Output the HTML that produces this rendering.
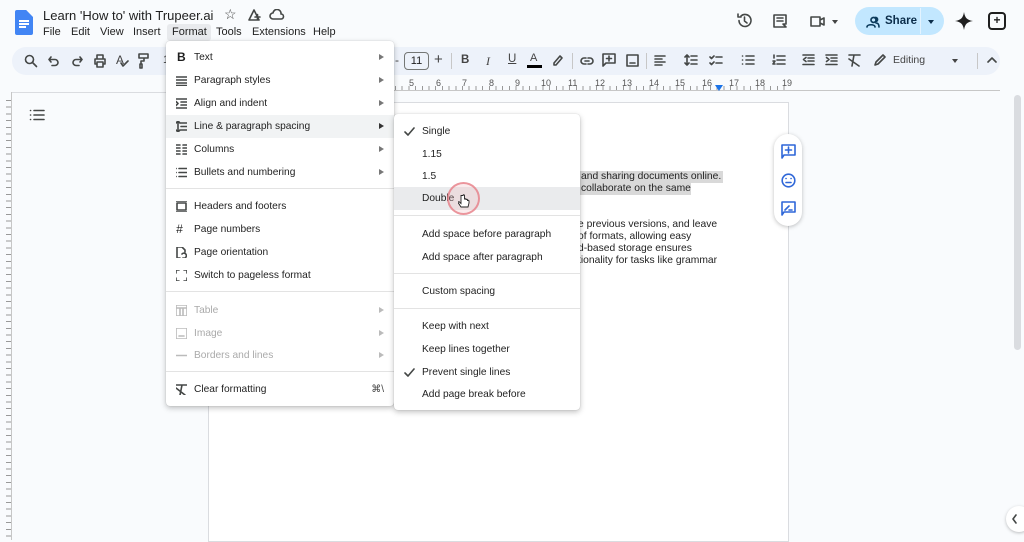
<!DOCTYPE html>
<html><head><meta charset="utf-8">
<style>
*{box-sizing:border-box;margin:0;padding:0}
body{width:1024px;height:540px;overflow:hidden;background:#f9fbfd;font-family:"Liberation Sans",Arial,sans-serif;color:#1f1f1f;position:relative}
.a{position:absolute}
.ic{position:absolute;fill:none;stroke:#444746;stroke-width:1.6;stroke-linecap:round;stroke-linejoin:round}
.menu{position:absolute;background:#fff;border-radius:4px;box-shadow:0 2px 6px rgba(0,0,0,.25),0 0 1px rgba(0,0,0,.2)}
.it{position:absolute;left:0;right:0;height:23px;font-size:10.2px;line-height:24px;color:#1f1f1f}
.it .t{position:absolute;left:28px}
.it .ar{position:absolute;right:10px;top:8px;width:0;height:0;border-left:5px solid #777;border-top:3px solid transparent;border-bottom:3px solid transparent}
.it.dis{color:#aaa}
.it.dis .ar{border-left-color:#bbb}
.sep{position:absolute;left:0;right:0;height:1px;background:#e3e3e3}
.mi{position:absolute;left:10px;top:6px;width:11px;height:11px}
.sub .t{left:28px}
.doc{position:absolute;font-size:10.3px;line-height:12px;color:#222;white-space:nowrap}
.rn{position:absolute;top:78px;font-size:9px;color:#555}
</style></head><body>
<div class="a" style="left:15px;top:10px;width:18px;height:25px;background:#4285f4;border-radius:2px;clip-path:polygon(0 0,62% 0,100% 28%,100% 100%,0 100%)"></div>
<div class="a" style="left:19px;top:20px;width:10px;height:1.5px;background:#fff"></div>
<div class="a" style="left:19px;top:23px;width:10px;height:1.5px;background:#fff"></div>
<div class="a" style="left:19px;top:26px;width:7px;height:1.5px;background:#fff"></div>
<div class="a" style="left:43px;top:8px;font-size:13px;color:#1f1f1f">Learn 'How to' with Trupeer.ai</div>
<div class="a" style="left:224px;top:6px;font-size:14px;color:#444">☆</div>
<svg class="ic" style="left:246px;top:8px" width="16" height="14"><path d="M3 12 L8 2 L13 12 Z M9 9h5 M11.5 6.5v5"/></svg>
<svg class="ic" style="left:269px;top:9px" width="16" height="12"><path d="M4 10 a3 3 0 0 1 0-6 a4 4 0 0 1 8 1 a2.5 2.5 0 0 1 0 5 Z"/></svg>
<div class="a" style="left:167px;top:24px;width:44px;height:17px;background:#e8eaed;border-radius:3px"></div>
<div class="a" style="top:26px;font-size:11px;left:43px">File</div>
<div class="a" style="top:26px;font-size:11px;left:71px">Edit</div>
<div class="a" style="top:26px;font-size:11px;left:100px">View</div>
<div class="a" style="top:26px;font-size:11px;left:133px">Insert</div>
<div class="a" style="top:26px;font-size:11px;left:172px">Format</div>
<div class="a" style="top:26px;font-size:11px;left:216px">Tools</div>
<div class="a" style="top:26px;font-size:11px;left:252px">Extensions</div>
<div class="a" style="top:26px;font-size:11px;left:313px">Help</div>
<svg class="ic" style="left:736px;top:12px" width="17" height="17"><path d="M3 8.5 a6 6 0 1 0 2-4.5 M2 2v3h3 M8.5 5v4l2.5 2"/></svg>
<svg class="ic" style="left:772px;top:13px" width="16" height="16"><path d="M2 2h12v9H11l3 3H2z M5 5h6 M5 8h6"/></svg>
<svg class="ic" style="left:809px;top:14px" width="18" height="14"><path d="M2 3h9v9H2z M11 6l4-2v7l-4-2"/></svg>
<div class="a" style="left:832px;top:20px;border-top:4px solid #444;border-left:3px solid transparent;border-right:3px solid transparent"></div>
<div class="a" style="left:855px;top:7px;width:89px;height:28px;background:#c2e7ff;border-radius:14px"></div>
<div class="a" style="left:920px;top:8px;width:1px;height:26px;background:#e3f3ff"></div>
<svg class="ic" style="left:866px;top:14px;stroke:#0b3a5c" width="14" height="14"><path d="M5 6 a2.5 2.5 0 1 0 0-.1 M1 13c0-3 8-3 8 0 M9 3.5a2 2 0 1 1 1 4 M10 9c2 0 3 1.5 3 4"/></svg>
<div class="a" style="left:885px;top:15px;font-size:11.5px;font-weight:bold;color:#0b2d4a">Share</div>
<div class="a" style="left:928px;top:20px;border-top:4px solid #0b2d4a;border-left:3px solid transparent;border-right:3px solid transparent"></div>
<svg class="a" style="left:955px;top:12px" width="18" height="18"><path d="M9 0 C10 6 12 8 18 9 C12 10 10 12 9 18 C8 12 6 10 0 9 C6 8 8 6 9 0Z" fill="#1f1f1f"/></svg>
<div class="a" style="left:988px;top:12px;width:18px;height:18px;border:2px solid #1f1f1f;border-radius:4px;font-size:12px;line-height:13px;text-align:center;font-weight:bold">+</div>
<div class="a" style="left:12px;top:47px;width:988px;height:28px;background:#edf2fa;border-radius:14px"></div>
<svg class="ic" style="left:24px;top:54px" width="14" height="14"><circle cx="5.5" cy="5.5" r="4"/><path d="M8.5 8.5l4 4"/></svg>
<svg class="ic" style="left:48px;top:55px" width="12" height="12"><path d="M3 2L1 4.5 3 7 M1 4.5h6a3 3 0 0 1 0 6H4"/></svg>
<svg class="ic" style="left:71px;top:55px" width="12" height="12"><path d="M9 2l2 2.5L9 7 M11 4.5H5a3 3 0 0 0 0 6h3"/></svg>
<svg class="ic" style="left:93px;top:54px" width="14" height="14"><path d="M4 5V1h6v4 M2 5h10v5h-2 M4 10H2V5 M4 8h6v5H4z"/></svg>
<div class="a" style="left:116px;top:53px;font-size:12px;color:#444">A</div><svg class="ic" style="left:120px;top:60px" width="10" height="8"><path d="M1 3l2 3 5-5"/></svg>
<svg class="ic" style="left:138px;top:53px" width="12" height="16"><path d="M1 1h9v4H1z M6 5v3H3v3 M2 11h2v4H2z"/></svg>
<div class="a" style="left:163px;top:54px;font-size:11px;color:#444">1</div>
<div class="a" style="left:395px;top:53px;font-size:12px;color:#444">-</div>
<div class="a" style="left:404px;top:52px;width:25px;height:18px;border:1px solid #747775;border-radius:4px;font-size:11px;line-height:16px;text-align:center">11</div>
<div class="a" style="left:434px;top:51px;font-size:15px;color:#444">+</div>
<div class="a" style="left:451px;top:53px;width:1px;height:16px;background:#c7c7c7"></div>
<div class="a" style="left:461px;top:54px;font-size:11.5px;font-weight:bold;color:#444">B</div>
<div class="a" style="left:486px;top:54px;font-size:12px;font-style:italic;font-family:'Liberation Serif',serif;color:#444">I</div>
<div class="a" style="left:508px;top:53px;font-size:11.5px;color:#444;text-decoration:underline">U</div>
<div class="a" style="left:530px;top:52px;font-size:11px;color:#444">A</div>
<div class="a" style="left:527px;top:65px;width:15px;height:3px;background:#000"></div>
<svg class="ic" style="left:552px;top:53px" width="12" height="13"><path d="M2 10l6-7 2 2-6 7H2z"/></svg>
<div class="a" style="left:572px;top:53px;width:1px;height:16px;background:#c7c7c7"></div>
<svg class="ic" style="left:580px;top:56px" width="14" height="10"><path d="M6 2H4a3 3 0 0 0 0 6h2 M8 2h2a3 3 0 0 1 0 6H8 M5 5h4"/></svg>
<svg class="ic" style="left:602px;top:53px" width="14" height="14"><path d="M1 1h12v9H4l-3 3z M7 3v5 M4.5 5.5h5"/></svg>
<svg class="ic" style="left:626px;top:54px" width="13" height="13"><path d="M1 1h11v11H1z M4 9h5"/></svg>
<div class="a" style="left:646px;top:53px;width:1px;height:16px;background:#c7c7c7"></div>
<svg class="ic" style="left:654px;top:54px" width="12" height="12"><path d="M1 2h10 M1 5h7 M1 8h10 M1 11h7"/></svg>
<svg class="ic" style="left:684px;top:54px" width="14" height="12"><path d="M3 1v10 M1 3l2-2 2 2 M1 9l2 2 2-2 M7 2h6 M7 6h6 M7 10h6"/></svg>
<svg class="ic" style="left:709px;top:54px" width="14" height="12"><path d="M1 3l1.5 1.5L5 2 M1 9l1.5 1.5L5 8 M7 3h6 M7 9h6"/></svg>
<svg class="ic" style="left:741px;top:54px" width="14" height="12"><path d="M1.5 2h.1 M1.5 6h.1 M1.5 10h.1 M5 2h8 M5 6h8 M5 10h8"/></svg>
<svg class="ic" style="left:772px;top:54px" width="14" height="12"><path d="M2 1v3 M1 7h2l-2 3h2 M5 2h8 M5 6h8 M5 10h8"/></svg>
<svg class="ic" style="left:802px;top:54px" width="13" height="12"><path d="M1 1h11 M6 4h6 M6 7h6 M1 10.5h11 M4 3.5L1.5 5.5 4 7.5"/></svg>
<svg class="ic" style="left:825px;top:54px" width="13" height="12"><path d="M1 1h11 M6 4h6 M6 7h6 M1 10.5h11 M1.5 3.5L4 5.5 1.5 7.5"/></svg>
<svg class="ic" style="left:848px;top:54px" width="13" height="13"><path d="M1 1h11 M6 1L4 12 M1 5l10 7"/></svg>
<svg class="ic" style="left:874px;top:54px" width="12" height="12"><path d="M1 11l1-3 7-7 2 2-7 7z"/></svg>
<div class="a" style="left:893px;top:54px;font-size:10.5px;color:#444">Editing</div>
<div class="a" style="left:952px;top:59px;border-top:4px solid #444;border-left:3px solid transparent;border-right:3px solid transparent"></div>
<div class="a" style="left:977px;top:53px;width:1px;height:16px;background:#c7c7c7"></div>
<svg class="ic" style="left:987px;top:57px" width="10" height="7"><path d="M1 5l4-4 4 4"/></svg>
<div class="a" style="left:208px;top:90px;width:792px;height:1px;background:#c7c7c7"></div>
<div class="a" style="left:395px;top:86px;width:392px;height:4px;background:repeating-linear-gradient(90deg,#999 0 1px,transparent 1px 6.7px)"></div>
<div class="rn" style="left:409px">5</div><div class="rn" style="left:436px">6</div><div class="rn" style="left:462px">7</div><div class="rn" style="left:489px">8</div><div class="rn" style="left:515px">9</div><div class="rn" style="left:541px">10</div><div class="rn" style="left:568px">11</div><div class="rn" style="left:595px">12</div><div class="rn" style="left:622px">13</div><div class="rn" style="left:649px">14</div><div class="rn" style="left:675px">15</div><div class="rn" style="left:702px">16</div><div class="rn" style="left:729px">17</div><div class="rn" style="left:755px">18</div><div class="rn" style="left:782px">19</div>
<div class="a" style="left:715px;top:85px;border-top:6px solid #1a73e8;border-left:4px solid transparent;border-right:4px solid transparent"></div>
<div class="a" style="left:11px;top:92px;width:1px;height:448px;background:#c7c7c7"></div>
<div class="a" style="left:6px;top:100px;width:5px;height:440px;background:repeating-linear-gradient(180deg,#999 0 1px,transparent 1px 6.7px)"></div>
<div class="a" style="left:12px;top:92px;width:196px;height:1px;background:#dadce0"></div>
<svg class="ic" style="left:29px;top:109px" width="16" height="12"><path d="M1.5 1.5h.1 M1.5 6h.1 M1.5 10.5h.1 M5 1.5h10 M5 6h10 M5 10.5h10"/></svg>
<div class="a" style="left:208px;top:102px;width:581px;height:440px;background:#fff;border:1px solid #dadce0"></div>
<div class="a" style="left:578px;top:171px;width:145px;height:12px;background:#d9d9d9"></div>
<div class="a" style="left:578px;top:183px;width:113px;height:12px;background:#d9d9d9"></div>
<div class="doc" style="left:581px;top:171px">and sharing documents online.</div>
<div class="doc" style="left:581px;top:183px">collaborate on the same</div>
<div class="doc" style="left:578px;top:219px">e previous versions, and leave</div>
<div class="doc" style="left:578px;top:231px">of formats, allowing easy</div>
<div class="doc" style="left:578px;top:243px">d-based storage ensures</div>
<div class="doc" style="left:578px;top:255px">tionality for tasks like grammar</div>
<div class="a" style="left:774px;top:134px;width:28px;height:92px;background:#fff;border-radius:14px;box-shadow:0 1px 4px rgba(0,0,0,.25)"></div>
<svg class="ic" style="left:781px;top:144px;stroke:#2f67d8" width="15" height="15"><path d="M1 1h13v10H3l-2 3z M7.5 3v6 M4.5 6h6"/></svg>
<svg class="ic" style="left:781px;top:173px;stroke:#2f67d8" width="15" height="15"><circle cx="7.5" cy="7.5" r="6.3"/><path d="M5 5.5h.1 M10 5.5h.1 M5 9.5h5"/></svg>
<svg class="ic" style="left:781px;top:201px;stroke:#2f67d8" width="15" height="15"><path d="M1 1h13v10H3l-2 3z M4 9l4-4 M8 9h3"/></svg>
<div class="a" style="left:1014px;top:95px;width:7px;height:255px;background:#dadce0;border-radius:4px"></div>
<div class="a" style="left:1006px;top:506px;width:26px;height:26px;background:#fff;border-radius:13px;box-shadow:0 1px 3px rgba(0,0,0,.25)"></div>
<svg class="ic" style="left:1011px;top:514px" width="8" height="10"><path d="M5 1L2 5l3 4"/></svg>

<div class="menu" style="left:166px;top:41px;width:228px;height:365px">
 <div class="it" style="top:5px"><span class="mi" style="font-weight:bold;font-size:12px;line-height:11px;left:11px">B</span><span class="t">Text</span><span class="ar"></span></div>
 <div class="it" style="top:28px"><svg class="ic mi" width="11" height="11"><path d="M0 2h11 M0 5h11 M0 8h11 M0 10.5h11"/></svg><span class="t">Paragraph styles</span><span class="ar"></span></div>
 <div class="it" style="top:51px"><svg class="ic mi" width="11" height="11"><path d="M0 1h11 M5 4h6 M5 7h6 M0 10h11 M0 3.5l2 2-2 2"/></svg><span class="t">Align and indent</span><span class="ar"></span></div>
 <div class="it" style="top:74px;background:#f1f3f4"><svg class="ic mi" width="11" height="11"><path d="M2 0v11 M0 2l2-2 2 2 M0 9l2 2 2-2 M5 2h6 M5 5.5h6 M5 9h6"/></svg><span class="t">Line &amp; paragraph spacing</span><span class="ar" style="border-left-color:#333"></span></div>
 <div class="it" style="top:97px"><svg class="ic mi" width="11" height="11"><path d="M0 1h4 M0 4h4 M0 7h4 M0 10h4 M7 1h4 M7 4h4 M7 7h4 M7 10h4"/></svg><span class="t">Columns</span><span class="ar"></span></div>
 <div class="it" style="top:120px"><svg class="ic mi" width="11" height="11"><path d="M0 1.5h.1 M0 5.5h.1 M0 9.5h.1 M3 1.5h8 M3 5.5h8 M3 9.5h8"/></svg><span class="t">Bullets and numbering</span><span class="ar"></span></div>
 <div class="sep" style="top:147px"></div>
 <div class="it" style="top:154px"><svg class="ic mi" width="11" height="11"><path d="M0 0h11 M1 2h9v7H1z M0 11h11"/></svg><span class="t">Headers and footers</span></div>
 <div class="it" style="top:177px"><span class="mi" style="font-size:12px;line-height:11px;font-style:italic">#</span><span class="t">Page numbers</span></div>
 <div class="it" style="top:200px"><svg class="ic mi" width="11" height="11"><path d="M6 0H1v11h3 M6 0l3 3v2 M7 11a2.5 2.5 0 1 0-1-4"/></svg><span class="t">Page orientation</span></div>
 <div class="it" style="top:223px"><svg class="ic mi" width="11" height="11"><path d="M0 3V0h3 M8 0h3v3 M11 8v3H8 M3 11H0V8"/></svg><span class="t">Switch to pageless format</span></div>
 <div class="sep" style="top:250px"></div>
 <div class="it dis" style="top:258px"><svg class="ic mi" style="stroke:#bbb" width="11" height="11"><path d="M0 0h11v11H0z M0 3h11 M4 3v8 M7 3v8"/></svg><span class="t">Table</span><span class="ar"></span></div>
 <div class="it dis" style="top:281px"><svg class="ic mi" style="stroke:#bbb" width="11" height="11"><path d="M0 0h11v11H0z M3 8h5"/></svg><span class="t">Image</span><span class="ar"></span></div>
 <div class="it dis" style="top:303px"><svg class="ic mi" style="stroke:#bbb" width="11" height="11"><path d="M0 5.5h11"/></svg><span class="t">Borders and lines</span><span class="ar"></span></div>
 <div class="sep" style="top:330px"></div>
 <div class="it" style="top:337px"><svg class="ic mi" width="11" height="11"><path d="M0 1h11 M6 1L4 11 M0 4l9 7"/></svg><span class="t">Clear formatting</span><span class="a" style="right:10px;font-size:10px;color:#444">⌘\</span></div>
</div>
<div class="menu sub" style="left:394px;top:114px;width:186px;height:296px">
 <div class="it" style="top:6px"><svg class="ic mi" width="11" height="11"><path d="M1 6l3 3 6-7"/></svg><span class="t">Single</span></div>
 <div class="it" style="top:29px"><span class="t">1.15</span></div>
 <div class="it" style="top:51px"><span class="t">1.5</span></div>
 <div class="it" style="top:73px;background:#eaebed"><span class="t">Double</span></div>
 <div class="sep" style="top:101px"></div>
 <div class="it" style="top:109px"><span class="t">Add space before paragraph</span></div>
 <div class="it" style="top:132px"><span class="t">Add space after paragraph</span></div>
 <div class="sep" style="top:159px"></div>
 <div class="it" style="top:166px"><span class="t">Custom spacing</span></div>
 <div class="sep" style="top:194px"></div>
 <div class="it" style="top:201px"><span class="t">Keep with next</span></div>
 <div class="it" style="top:224px"><span class="t">Keep lines together</span></div>
 <div class="it" style="top:247px"><svg class="ic mi" width="11" height="11"><path d="M1 6l3 3 6-7"/></svg><span class="t">Prevent single lines</span></div>
 <div class="it" style="top:269px"><span class="t">Add page break before</span></div>
</div>
<div class="a" style="left:447px;top:182px;width:33px;height:33px;border-radius:50%;border:2px solid rgba(230,120,130,.75);background:rgba(240,180,185,.25)"></div>
<svg class="a" style="left:458px;top:194px" width="12" height="15"><path d="M3 1.5v8l-1.5-1.5c-1-.8-1.8.3-1 1.2L3 13h7l1-4V7c0-1-1.5-1-1.5 0V6c0-1-1.5-1-1.5 0v-.5c0-1-1.5-1-1.5 0V1.5c0-1-1.5-1-1.5 0z" fill="#fff" stroke="#222" stroke-width="0.9"/></svg>
</body></html>
